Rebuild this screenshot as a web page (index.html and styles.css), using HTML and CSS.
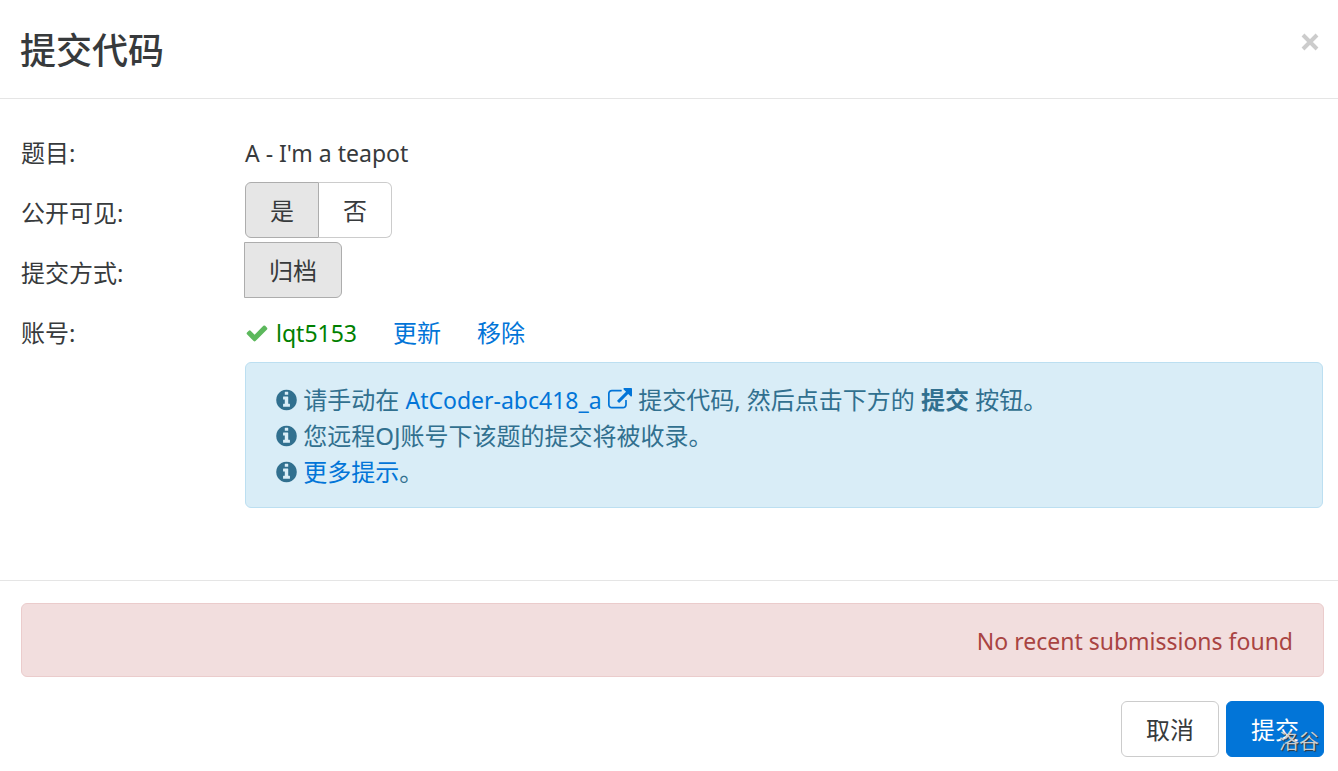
FILE: index.html
```html
<!DOCTYPE html>
<html lang="zh-CN">
<head>
<meta charset="utf-8">
<meta name="viewport" content="width=device-width, initial-scale=1">
<title>提交代码</title>
<link rel="stylesheet" href="styles.css">
</head>
<body>
<svg class="sprite" aria-hidden="true">
  <symbol id="check" viewBox="0 0 1792 1792"><path d="M1671 566q0 40-28 68l-724 724-136 136q-28 28-68 28t-68-28l-136-136-362-362q-28-28-28-68t28-68l136-136q28-28 68-28t68 28l294 295 656-657q28-28 68-28t68 28l136 136q28 28 28 68z"/></symbol>
  <symbol id="info" viewBox="128 0 1536 1792"><path d="M1152 1376v-160q0-14-9-23t-23-9h-96v-512q0-14-9-23t-23-9h-320q-14 0-23 9t-9 23v160q0 14 9 23t23 9h96v320h-96q-14 0-23 9t-9 23v160q0 14 9 23t23 9h448q14 0 23-9t9-23zm-128-896v-160q0-14-9-23t-23-9h-192q-14 0-23 9t-9 23v160q0 14 9 23t23 9h192q14 0 23-9t9-23zm640 416q0 209-103 385.500t-279.500 279.500-385.500 103-385.500-103-279.500-279.500-103-385.500 103-385.500 279.500-279.500 385.500-103 385.500 103 279.500 279.500 103 385.500z"/></symbol>
  <symbol id="external" viewBox="0 0 1792 1792"><path d="M1408 928v320q0 119-84.500 203.500t-203.500 84.500h-832q-119 0-203.500-84.500t-84.500-203.500v-832q0-119 84.500-203.500t203.500-84.500h704q14 0 23 9t9 23v64q0 14-9 23t-23 9h-704q-66 0-113 47t-47 113v832q0 66 47 113t113 47h832q66 0 113-47t47-113v-320q0-14 9-23t23-9h64q14 0 23 9t9 23zm384-864v512q0 26-19 45t-45 19-45-19l-176-176-652 652q-10 10-23 10t-23-10l-114-114q-10-10-10-23t10-23l652-652-176-176q-19-19-19-45t19-45 45-19h512q26 0 45 19t19 45z"/></symbol>
</svg>
<form class="modal">
  <header class="modal-header">
    <h1 class="title">提交代码</h1>
    <button class="close" type="button" aria-label="关闭"><svg class="close-icon" viewBox="0 0 18 18"><path d="M2 2l14 14M16 2L2 16"/></svg></button>
  </header>
  <main class="modal-body">
    <div class="row">
      <div class="label">题目:</div>
      <div class="value latin">A - I'm a teapot</div>
    </div>
    <div class="row">
      <div class="label" id="visible-label">公开可见:</div>
      <div class="group" role="group" aria-labelledby="visible-label">
        <button class="btn active" type="button" aria-pressed="true">是</button>
        <button class="btn" type="button" aria-pressed="false">否</button>
      </div>
    </div>
    <div class="row">
      <div class="label" id="method-label">提交方式:</div>
      <div class="group group-tail" role="group" aria-labelledby="method-label">
        <button class="btn active" type="button" aria-pressed="true">归档</button>
      </div>
    </div>
    <div class="row">
      <div class="label">账号:</div>
      <div class="value account">
        <span class="user"><svg class="icon check"><use href="#check"/></svg><span class="latin">lqt5153</span></span>
        <a href="#update">更新</a>
        <a href="#remove">移除</a>
      </div>
    </div>
    <div class="alert info">
      <p class="line"><svg class="icon icon-info"><use href="#info"/></svg> 请手动在 <a href="#problem"><span class="latin">AtCoder-abc418_a</span> <svg class="icon"><use href="#external"/></svg></a> 提交代码, 然后点击下方的 <strong>提交</strong> 按钮。</p>
      <p class="line"><svg class="icon icon-info"><use href="#info"/></svg> 您远程OJ账号下该题的提交将被收录。</p>
      <p class="line"><svg class="icon icon-info"><use href="#info"/></svg> <a href="#tips">更多提示</a>。</p>
    </div>
  </main>
  <footer class="modal-footer">
    <div class="alert danger latin">No recent submissions found</div>
    <div class="actions">
      <button class="btn" type="button">取消</button>
      <button class="btn primary" type="submit">提交</button>
    </div>
  </footer>
  <span class="watermark">洛谷</span>
</form>
</body>
</html>
```
FILE: styles.css
```css
* {
  box-sizing: border-box;
}

body {
  margin: 0;
  background: #fff;
  color: #373a3c;
  font: 24px/36px "Noto Sans", "Noto Sans CJK SC", sans-serif;
}

a {
  color: #0275d8;
  text-decoration: none;
}

.sprite {
  display: none;
}

.latin {
  font-size: 23px;
}

.modal {
  position: relative;
}

.modal-header {
  display: flex;
  justify-content: space-between;
  align-items: flex-start;
  padding: 24px 19px 20px 20px;
  border-bottom: 1px solid #e5e5e5;
}

.title {
  margin: 0;
  font-size: 36px;
  line-height: 54px;
  font-weight: 500;
}

.close {
  margin-top: 9px;
  padding: 0;
  border: 0;
  background: none;
  line-height: 0;
}

.close-icon {
  width: 18px;
  height: 18px;
  fill: none;
  stroke: #ccc;
  stroke-width: 4;
}

.modal-body {
  padding: 23px 15px 72px 21px;
}

.row {
  display: grid;
  grid-template-columns: 224px 1fr;
  min-height: 60px;
}

.label,
.value {
  padding-top: 13px;
}

.group {
  display: flex;
  align-items: flex-start;
}

.btn {
  padding: 10px 24px 8px;
  border: 1px solid #ccc;
  border-radius: 6px;
  background: #fff;
  color: #373a3c;
  font: inherit;
}

.group .btn + .btn {
  border-left: 0;
  border-radius: 0 6px 6px 0;
}

.btn.active {
  border-color: #adadad;
  background: #e6e6e6;
}

.group .btn:first-child:not(:last-child) {
  border-radius: 6px 0 0 6px;
}

.group-tail {
  margin-left: -1px;
}

.group-tail .btn {
  border-radius: 0 6px 6px 0;
}

.account {
  display: flex;
  gap: 36px;
}

.user {
  color: #008000;
}

.icon {
  width: 24px;
  height: 24px;
  vertical-align: -3px;
  fill: currentColor;
}

.icon-info {
  width: 21px;
}

.check {
  margin-right: 7px;
  color: #5cb85c;
}

.alert {
  padding: 19px 30px 17px;
  border: 1px solid;
  border-radius: 6px;
}

.info {
  margin-left: 224px;
  border-color: #bcdff1;
  background: #d9edf7;
  color: #31708f;
}

.line {
  margin: 0;
}

.danger {
  border-color: #ebcccc;
  background: #f2dede;
  color: #a94442;
  text-align: right;
}

.modal-footer {
  padding: 22px 14px 14px 21px;
  border-top: 1px solid #e5e5e5;
}

.actions {
  display: flex;
  justify-content: flex-end;
  gap: 7px;
  margin-top: 24px;
}

.btn.primary {
  border-color: #0275d8;
  background: #0275d8;
  color: #fff;
}

.watermark {
  position: absolute;
  right: 19px;
  bottom: 15px;
  color: #c8cdd2;
  font-size: 20px;
  line-height: 28px;
  text-shadow: 1px 1px 1px #333;
  pointer-events: none;
}
```
